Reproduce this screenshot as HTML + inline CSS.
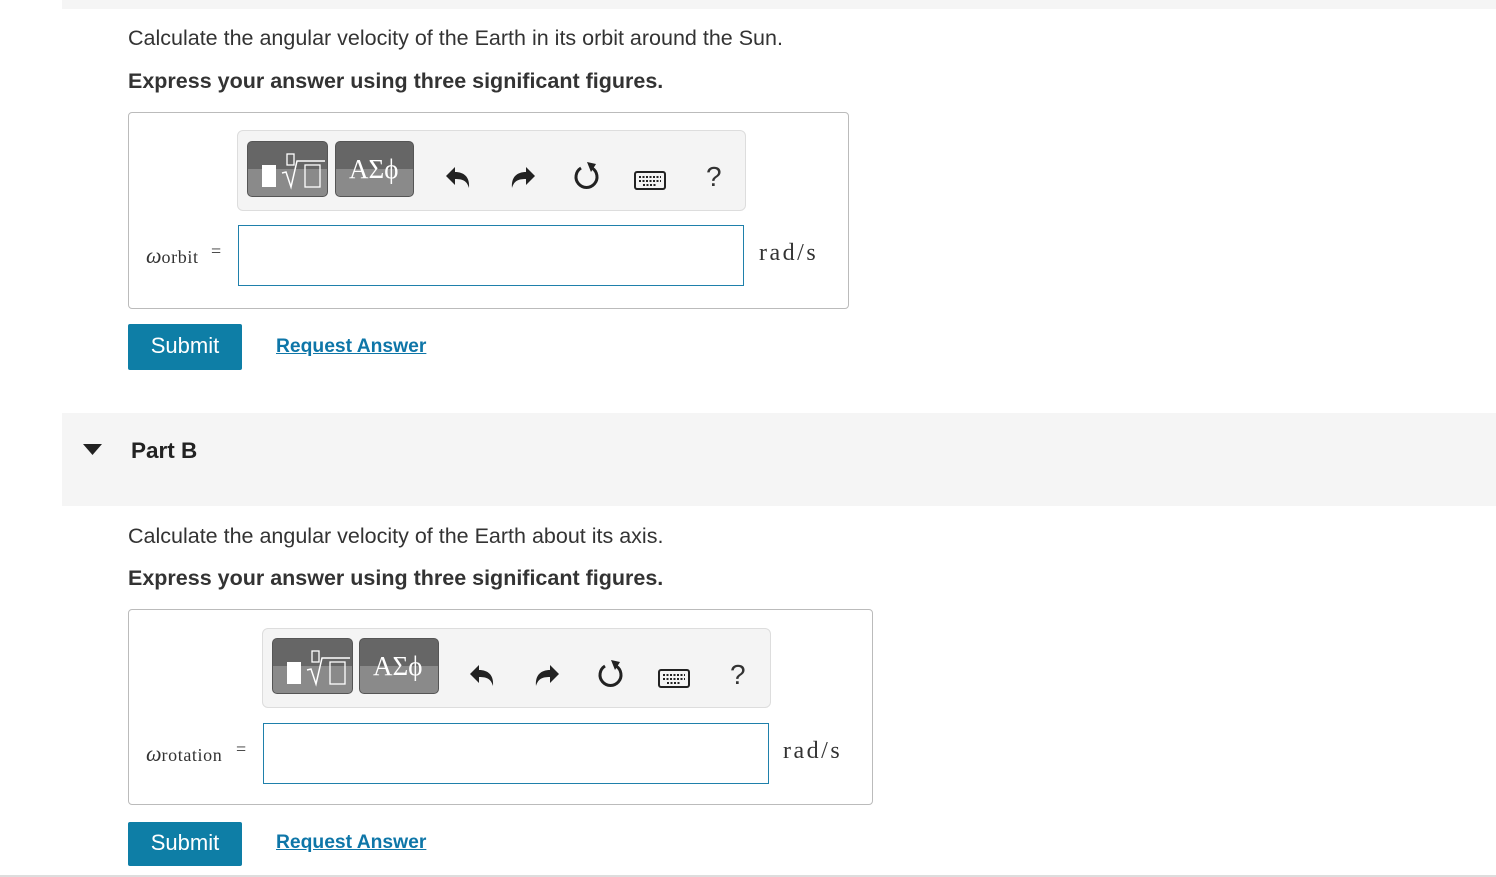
<!DOCTYPE html>
<html><head><meta charset="utf-8"><style>
body{margin:0;width:1496px;height:877px;position:relative;overflow:hidden;background:#fff;font-family:"Liberation Sans",sans-serif;color:#333}
.a{position:absolute}
.t{font-size:21.5px;color:#333;white-space:nowrap}
.b{font-size:21.5px;font-weight:bold;color:#333;white-space:nowrap}
.box{position:absolute;border:1px solid #bbb;border-radius:4px;background:#fff}
.tb{position:absolute;border:1px solid #ddd;border-radius:6px;background:#f4f4f4}
.btn{position:absolute;border-radius:5px;background:linear-gradient(#666 0,#666 50%,#8a8a8a 50%,#8a8a8a 100%);border:1px solid #555}
.inp{position:absolute;border:1.5px solid #1f80ab;background:#fff}
.sub{position:absolute;background:#0e7ea6;color:#fff;font-size:22px;border-radius:2px;text-align:center}
.ra{position:absolute;color:#0e76a8;font-weight:bold;font-size:19.3px;text-decoration:underline}
.serif{font-family:"Liberation Serif","DejaVu Serif",serif}
.lbl{font-size:22px;font-style:italic}
.lbl span{font-style:normal;font-size:18px;letter-spacing:0.6px}
.lbl b{font-weight:normal;font-style:normal;font-size:18px;position:absolute;top:-2px}
.rad{font-size:24px;letter-spacing:2.5px}
</style></head><body>
<div class="a" style="left:62px;top:0;width:1434px;height:9px;background:#f5f5f5"></div>
<div class="a t" style="left:128px;top:26px">Calculate the angular velocity of the Earth in its orbit around the Sun.</div>
<div class="a b" style="left:128px;top:69px">Express your answer using three significant figures.</div>

<div class="box" style="left:128px;top:112px;width:719px;height:195px"></div>
<div class="tb" style="left:237px;top:130px;width:507px;height:79px"></div>
<div class="btn" style="left:247px;top:141px;width:79px;height:54px"></div>
<svg class="a" style="left:247px;top:141px" width="80" height="55">
<rect x="15" y="24" width="14" height="22" fill="#fff"/>
<rect x="40" y="13" width="7" height="11" fill="none" stroke="#fff" stroke-width="1.3"/>
<path d="M35 32 L39 31 L44 46 L50 20 L78 20" fill="none" stroke="#fff" stroke-width="1.5"/>
<rect x="58" y="24" width="15" height="22" fill="none" stroke="#fff" stroke-width="1.3"/>
</svg>
<div class="btn" style="left:335px;top:141px;width:77px;height:54px"></div>
<div class="a serif" style="left:349px;top:154px;color:#fff;font-size:27px">ΑΣϕ</div>

<svg class="a" style="left:440px;top:155px" width="300" height="45" viewBox="0 0 300 45">
<g fill="#222">
<path d="M6 21 L15 12 L15 17 C24 17 30 22 29 33 C27 26 23 24 15 24 L15 30 Z"/>
<path d="M95 21 L86 12 L86 17 C77 17 71 22 72 33 C74 26 78 24 86 24 L86 30 Z"/>
</g>
<path d="M141 13 A10.5 10.5 0 1 0 152 13" fill="none" stroke="#222" stroke-width="3"/>
<path d="M147 7 L156 9 L151 17 Z" fill="#222"/>
<rect x="195" y="17" width="30" height="17" rx="2" fill="none" stroke="#222" stroke-width="2"/>
<path d="M199 22h22M199 26h22M203 30h14" stroke="#222" stroke-width="2" stroke-dasharray="2 1.5"/>
<text x="266" y="31" font-family="Liberation Sans" font-size="28" fill="#333">?</text>
</svg>

<div class="a serif lbl" style="left:146px;top:243px">ω<span>orbit</span><b style="left:65px">=</b></div>
<div class="inp" style="left:238px;top:225px;width:504px;height:59px"></div>
<div class="a serif rad" style="left:759px;top:240px">rad/s</div>
<div class="sub" style="left:128px;top:324px;width:114px;height:46px;line-height:44px">Submit</div>
<div class="ra" style="left:276px;top:336px">Request Answer</div>

<div class="a" style="left:62px;top:413px;width:1434px;height:93px;background:#f5f5f5"></div>
<svg class="a" style="left:83px;top:444px" width="20" height="12"><path d="M0 0 L19 0 L9.5 11 Z" fill="#222"/></svg>
<div class="a b" style="left:131px;top:438px;font-size:22.5px;color:#222">Part B</div>

<div class="a t" style="left:128px;top:524px">Calculate the angular velocity of the Earth about its axis.</div>
<div class="a b" style="left:128px;top:566px">Express your answer using three significant figures.</div>

<div class="box" style="left:128px;top:609px;width:743px;height:194px"></div>
<div class="tb" style="left:262px;top:628px;width:507px;height:78px"></div>
<div class="btn" style="left:272px;top:638px;width:79px;height:54px"></div>
<svg class="a" style="left:272px;top:638px" width="80" height="55">
<rect x="15" y="24" width="14" height="22" fill="#fff"/>
<rect x="40" y="13" width="7" height="11" fill="none" stroke="#fff" stroke-width="1.3"/>
<path d="M35 32 L39 31 L44 46 L50 20 L78 20" fill="none" stroke="#fff" stroke-width="1.5"/>
<rect x="58" y="24" width="15" height="22" fill="none" stroke="#fff" stroke-width="1.3"/>
</svg>
<div class="btn" style="left:359px;top:638px;width:78px;height:54px"></div>
<div class="a serif" style="left:373px;top:651px;color:#fff;font-size:27px">ΑΣϕ</div>

<svg class="a" style="left:464px;top:653px" width="300" height="45" viewBox="0 0 300 45">
<g fill="#222">
<path d="M6 21 L15 12 L15 17 C24 17 30 22 29 33 C27 26 23 24 15 24 L15 30 Z"/>
<path d="M95 21 L86 12 L86 17 C77 17 71 22 72 33 C74 26 78 24 86 24 L86 30 Z"/>
</g>
<path d="M141 13 A10.5 10.5 0 1 0 152 13" fill="none" stroke="#222" stroke-width="3"/>
<path d="M147 7 L156 9 L151 17 Z" fill="#222"/>
<rect x="195" y="17" width="30" height="17" rx="2" fill="none" stroke="#222" stroke-width="2"/>
<path d="M199 22h22M199 26h22M203 30h14" stroke="#222" stroke-width="2" stroke-dasharray="2 1.5"/>
<text x="266" y="31" font-family="Liberation Sans" font-size="28" fill="#333">?</text>
</svg>

<div class="a serif lbl" style="left:146px;top:741px">ω<span>rotation</span><b style="left:90px">=</b></div>
<div class="inp" style="left:263px;top:723px;width:504px;height:59px"></div>
<div class="a serif rad" style="left:783px;top:738px">rad/s</div>
<div class="sub" style="left:128px;top:822px;width:114px;height:44px;line-height:42px">Submit</div>
<div class="ra" style="left:276px;top:832px">Request Answer</div>
<div class="a" style="left:0;top:875px;width:1496px;height:2px;background:#ddd"></div>
</body></html>
